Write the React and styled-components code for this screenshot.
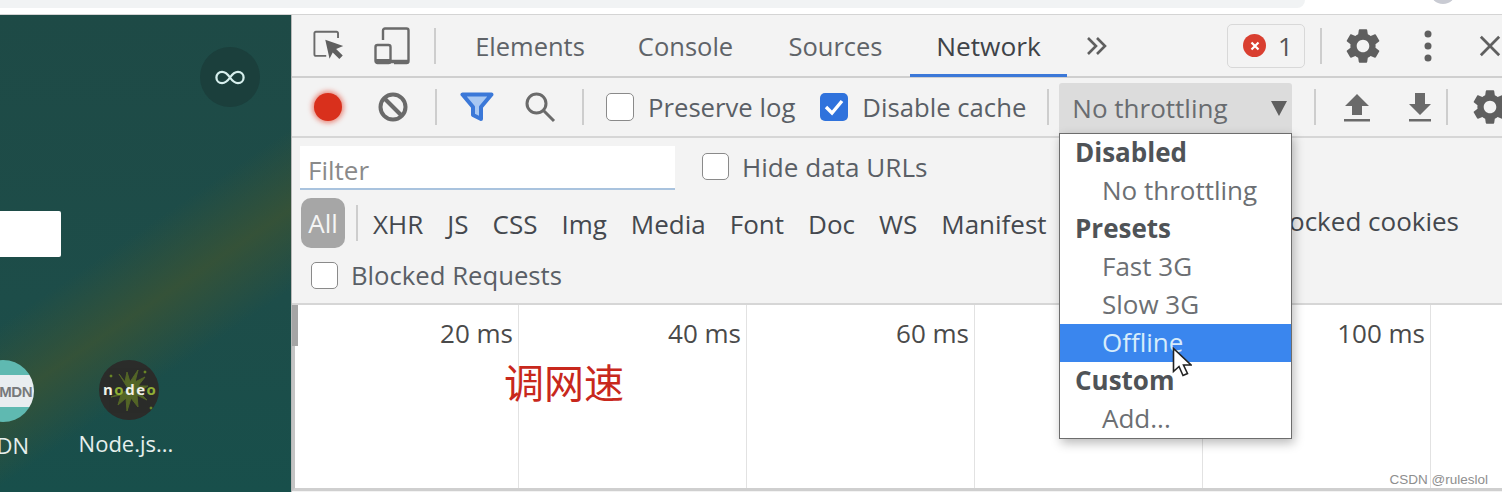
import React from "react"
import styled, { createGlobalStyle } from "styled-components"
import { MdSettings } from "react-icons/md"

const tabs = [
  { label: "Elements", width: 160 },
  { label: "Console", width: 151 },
  { label: "Sources", width: 149 },
  { label: "Network", width: 157, active: true },
]
const types = ["XHR", "JS", "CSS", "Img", "Media", "Font", "Doc", "WS", "Manifest", "Other"]
const marks = ["20 ms", "40 ms", "60 ms", "80 ms", "100 ms", ""]
const menu = [
  { label: "Disabled", title: true },
  { label: "No throttling" },
  { label: "Presets", title: true },
  { label: "Fast 3G" },
  { label: "Slow 3G" },
  { label: "Offline", active: true },
  { label: "Custom", title: true },
  { label: "Add..." },
]

const App = () => (
  <Page>
    <GlobalStyle />
    <TopBar>
      <AddressStrip />
      <Avatar />
    </TopBar>
    <Main>
      <Wallpaper>
        <InfinityButton>
          <svg width="30" height="15" viewBox="0 0 32 16" fill="none" stroke="#d6efed" strokeWidth="2.400">
            <path d="M16 8C13 3.500 10.500 2 7.500 2 4 2 1.500 4.500 1.500 8s2.500 6 6 6c3 0 5.500-1.500 8.500-6s5.500-6 8.500-6c3.500 0 6 2.500 6 6s-2.500 6-6 6c-3 0-5.500-1.500-8.500-6z" />
          </svg>
        </InfinityButton>
        <SearchStub />
        <Shortcuts>
          <Shortcut>
            <MdnLogo><span>MDN</span></MdnLogo>
            <ShortcutLabel>MDN</ShortcutLabel>
          </Shortcut>
          <Shortcut>
            <NodeLogo>
              <svg width="60" height="60" viewBox="0 0 60 60" fill="#6f8c26" stroke="#6f8c26" strokeWidth="1">
                <path d="M30 30L20 14l6 8 2-10 3 10 8-12-3 12 10-5-7 9 10 0-9 6 8 8-10-5 1 12-7-9-4 13-1-13-8 7 3-10-10 2z" opacity=".6" />
                <circle cx="52" cy="48" r="1" />
                <circle cx="12" cy="16" r="1" />
                <circle cx="46" cy="12" r="1" />
              </svg>
              <NodeWord>n<NodeDot>o</NodeDot>de<NodeDot>o</NodeDot></NodeWord>
            </NodeLogo>
            <ShortcutLabel $shift={6}>Node.js...</ShortcutLabel>
          </Shortcut>
        </Shortcuts>
      </Wallpaper>

      <Devtools>
        <TabBar>
          <IconSlot $w={62}>
            <svg width="34" height="33" viewBox="0 0 36 34" fill="none">
              <path d="M14 28H3a1.500 1.500 0 0 1-1.500-1.500V4A1.500 1.500 0 0 1 3 2.500h22A1.500 1.500 0 0 1 26.500 4v5" stroke="#6a6a6a" strokeWidth="2" />
              <path d="M13 11l19 6.500-7.500 3.200 7 7-3.600 3.600-7-7L17.500 31z" fill="#5f5f5f" />
            </svg>
          </IconSlot>
          <IconSlot $w={61}>
            <svg width="36" height="38" viewBox="0 0 36 38" fill="none" stroke="#6a6a6a" strokeWidth="2.400">
              <path d="M9 13V3.500A2 2 0 0 1 11 1.500h21.500a2 2 0 0 1 2 2V34a2 2 0 0 1-2 2H20" />
              <rect x="1.500" y="18" width="15" height="18" rx="2" />
              <path d="M1.500 34h15" strokeWidth="4" />
              <path d="M16 34.500h18" strokeWidth="3.500" />
            </svg>
          </IconSlot>
          <Divider $left={12} $right={14} />
          {tabs.map((tab) => (
            <Tab key={tab.label} $w={tab.width} $active={tab.active}>{tab.label}</Tab>
          ))}
          <IconSlot $w={60}>
            <svg width="22" height="20" viewBox="0 0 22 20" fill="none" stroke="#5f5f5f" strokeWidth="2.600">
              <path d="M2 2l8 8-8 8M11 2l8 8-8 8" />
            </svg>
          </IconSlot>
          <ErrorBadge>
            <ErrorDot>
              <svg width="10" height="10" viewBox="0 0 10 10" stroke="#fff" strokeWidth="2.200">
                <path d="M1.500 1.500l7 7M8.500 1.500l-7 7" />
              </svg>
            </ErrorDot>
            1
          </ErrorBadge>
          <Divider $left={15} $right={11} />
          <IconSlot $w={60}>
            <MdSettings size={42} color="#5f5f5f" />
          </IconSlot>
          <IconSlot $w={70}>
            <svg width="10" height="32" viewBox="0 0 10 32" fill="#5f5f5f">
              <circle cx="5" cy="4" r="3.500" />
              <circle cx="5" cy="16" r="3.500" />
              <circle cx="5" cy="28" r="3.500" />
            </svg>
          </IconSlot>
          <IconSlot $w={54}>
            <svg width="22" height="22" viewBox="0 0 24 24" stroke="#5f5f5f" strokeWidth="3">
              <path d="M2 2l20 20M22 2L2 22" />
            </svg>
          </IconSlot>
        </TabBar>

        <ActionBar>
          <IconSlot $w={64}><RecordDot /></IconSlot>
          <IconSlot $w={65}>
            <svg width="30" height="30" viewBox="0 0 30 30" fill="none" stroke="#6a6a6a" strokeWidth="4">
              <circle cx="15" cy="15" r="12.500" />
              <path d="M6 6l18 18" />
            </svg>
          </IconSlot>
          <Divider $left={10} $right={8} />
          <IconSlot $w={64}>
            <svg width="34" height="30" viewBox="0 0 34 30">
              <path d="M2.500 2.500h29L21 15v12l-8-4v-8z" fill="#a9c8f2" stroke="#3b78d8" strokeWidth="4" strokeLinejoin="round" />
            </svg>
          </IconSlot>
          <IconSlot $w={62}>
            <svg width="32" height="32" viewBox="0 0 32 32" fill="none" stroke="#6a6a6a" strokeWidth="3">
              <circle cx="12.500" cy="12.500" r="9.500" />
              <path d="M19.500 19.500L30 30" />
            </svg>
          </IconSlot>
          <Divider $left={11} $right={22} />
          <CheckField $gap={14}><Box $size={28} />Preserve log</CheckField>
          <CheckField $gap={14} $left={25}><Box $size={28} $checked><CheckMark /></Box>Disable cache</CheckField>
          <Divider $left={21} $right={10} />
          <ThrottleSelect>
            No throttling
            <Caret />
          </ThrottleSelect>
          <Divider $left={22} $right={9} />
          <IconSlot $w={64}>
            <svg width="26" height="30" viewBox="0 0 26 30" fill="#6a6a6a">
              <path d="M13 2l12 12h-7v9H8v-9H1zM0 27h26v2.500H0z" />
            </svg>
          </IconSlot>
          <IconSlot $w={62}>
            <svg width="22" height="30" viewBox="0 0 22 30" fill="#6a6a6a">
              <path d="M6 1h10v11h6L11 23 0 12h6zM0 27h22v2.500H0z" />
            </svg>
          </IconSlot>
          <Divider $left={-5} $right={21} />
          <IconSlot $w={42}>
            <MdSettings size={42} color="#5f5f5f" />
          </IconSlot>
        </ActionBar>

        <FilterPanel>
          <FilterRow>
            <FilterInput>Filter</FilterInput>
            <HideField $gap={13} $left={27}><Box $size={27} />Hide data URLs</HideField>
          </FilterRow>
          <TypeRow>
            <AllPill>All</AllPill>
            <Divider $left={11} $right={15} />
            {types.map((type) => (
              <TypeLabel key={type}>{type}</TypeLabel>
            ))}
            <CookieLabel>Has blocked cookies</CookieLabel>
          </TypeRow>
          <BlockedRow>
            <CheckField $gap={13}><Box $size={27} />Blocked Requests</CheckField>
          </BlockedRow>
        </FilterPanel>

        <Timeline>
          <ScrollThumb />
          {marks.map((mark, i) => (
            <Mark key={i} $w={i === 0 ? 224 : 228} $last={i === marks.length - 1}>{mark}</Mark>
          ))}
        </Timeline>

        <ThrottleMenu>
          {menu.map((item) => (
            <MenuRow key={item.label} $title={item.title} $active={item.active}>{item.label}</MenuRow>
          ))}
          <Pointer width="20" height="30" viewBox="0 0 20 30">
            <path d="M1.500 1.500v23l5.500-5 4 9 4.500-2-4-8.500h7.500z" fill="#fff" stroke="#222" strokeWidth="1.600" />
          </Pointer>
        </ThrottleMenu>

        <Caption>调网速</Caption>
        <Watermark>CSDN @ruleslol</Watermark>
      </Devtools>
    </Main>
  </Page>
)

export default App

const GlobalStyle = createGlobalStyle`
  html, body {
    margin: 0;
    padding: 0;
    background: #fff;
  }
`

const Page = styled.div`
  width: 1502px;
  height: 492px;
  overflow: hidden;
  display: flex;
  flex-direction: column;
  font-family: "Open Sans", "Noto Sans CJK SC", sans-serif;
  color: #5a5f66;
`

const TopBar = styled.div`
  height: 15px;
  flex: none;
  display: flex;
  overflow: hidden;
  background: #fff;
  border-bottom: 1px solid #d4d4d4;
  box-sizing: border-box;
`

const AddressStrip = styled.div`
  width: 1305px;
  height: 8px;
  background: #f1f3f4;
  border-bottom-right-radius: 8px;
`

const Avatar = styled.div`
  width: 26px;
  height: 26px;
  margin: -22px 0 0 125px;
  border-radius: 50%;
  background: #c9cbd3;
`

const Main = styled.div`
  flex: 1;
  min-height: 0;
  display: flex;
`

const Wallpaper = styled.div`
  width: 291px;
  flex: none;
  display: flex;
  flex-direction: column;
  overflow: hidden;
  box-sizing: border-box;
  padding-top: 32px;
  background:
    linear-gradient(146deg, transparent 46%, rgba(62, 84, 50, 0.72) 58%, transparent 70%),
    linear-gradient(#1e4a46, #1d4d49 60%, #184f4b);
`

const InfinityButton = styled.div`
  width: 60px;
  height: 60px;
  align-self: flex-end;
  margin-right: 31px;
  border-radius: 50%;
  background: #1b3f3c;
  display: flex;
  align-items: center;
  justify-content: center;
`

const SearchStub = styled.div`
  width: 61px;
  height: 46px;
  margin-top: 104px;
  background: #fff;
  border-radius: 0 2px 2px 0;
`

const Shortcuts = styled.div`
  display: flex;
  margin: 103px 0 0 -60px;
`

const Shortcut = styled.div`
  width: 126px;
  display: flex;
  flex-direction: column;
  align-items: center;
`

const MdnLogo = styled.div`
  width: 62px;
  height: 62px;
  box-sizing: border-box;
  padding-right: 2px;
  border-radius: 50%;
  background: linear-gradient(#5fb9b1 24%, #e9edf0 24%, #e9edf0 76%, #5fb9b1 76%);
  display: flex;
  align-items: center;
  justify-content: flex-end;
  font: 700 15px "Liberation Sans", sans-serif;
  letter-spacing: -0.5px;
  color: #77797c;
`

const NodeLogo = styled.div`
  width: 60px;
  height: 60px;
  position: relative;
  border-radius: 50%;
  overflow: hidden;
  background: #2b2c2a;
`

const NodeWord = styled.span`
  position: absolute;
  left: 4px;
  top: 19px;
  font: 700 15px "Open Sans", sans-serif;
  letter-spacing: 1.500px;
  color: #f1f1e8;
`

const NodeDot = styled.span`
  color: #8fae35;
`

const ShortcutLabel = styled.div`
  margin: 7px ${(props) => props.$shift || 0}px 0 0;
  font-size: 22px;
  line-height: 32px;
  color: #e6efed;
  white-space: nowrap;
`

const Devtools = styled.div`
  flex: 1;
  min-width: 0;
  position: relative;
  display: flex;
  flex-direction: column;
  background: #f3f3f3;
  border-left: 1px solid #b9b9b9;
  font-size: 26px;
`

const TabBar = styled.div`
  height: 63px;
  flex: none;
  box-sizing: border-box;
  display: flex;
  align-items: center;
  padding-left: 7px;
  border-bottom: 2px solid #cfcfcf;
`

const IconSlot = styled.div`
  width: ${(props) => props.$w}px;
  flex: none;
  display: flex;
  align-items: center;
  justify-content: center;
`

const Divider = styled.div`
  width: 2px;
  height: 36px;
  flex: none;
  margin: 0 ${(props) => props.$right}px 0 ${(props) => props.$left}px;
  background: #cdcdcd;
`

const Tab = styled.div`
  width: ${(props) => props.$w}px;
  height: 100%;
  flex: none;
  box-sizing: border-box;
  display: flex;
  align-items: center;
  justify-content: center;
  padding-top: 3px;
  font-size: ${(props) => (props.$active ? "26.300px" : "25.500px")};
  border-bottom: 3px solid ${(props) => (props.$active ? "#3b78d8" : "transparent")};
  margin-bottom: ${(props) => (props.$active ? "-1px" : "0")};
  color: ${(props) => (props.$active ? "#3f4348" : "#5f6368")};
`

const ErrorBadge = styled.div`
  width: 78px;
  height: 44px;
  flex: none;
  box-sizing: border-box;
  margin-left: 100px;
  display: flex;
  align-items: center;
  gap: 12px;
  padding-left: 15px;
  border: 1px solid #d8d8d8;
  border-radius: 5px;
  color: #555;
`

const ErrorDot = styled.div`
  width: 23px;
  height: 23px;
  border-radius: 50%;
  background: #d93f30;
  display: flex;
  align-items: center;
  justify-content: center;
`

const ActionBar = styled.div`
  height: 60px;
  flex: none;
  box-sizing: border-box;
  display: flex;
  align-items: center;
  padding-left: 4px;
  border-bottom: 2px solid #d6d6d6;
`

const RecordDot = styled.div`
  width: 28px;
  height: 28px;
  border-radius: 50%;
  background: #d9301c;
  box-shadow: 0 0 5px 2px rgba(226, 70, 50, 0.6);
`

const CheckField = styled.label`
  display: flex;
  align-items: center;
  gap: ${(props) => props.$gap}px;
  margin-left: ${(props) => props.$left || 0}px;
  font-size: 25.700px;
  white-space: nowrap;
`

const HideField = styled(CheckField)`
  margin-bottom: 3px;
  font-size: 26.100px;
`

const Box = styled.span`
  width: ${(props) => props.$size}px;
  height: ${(props) => props.$size}px;
  flex: none;
  box-sizing: border-box;
  display: flex;
  align-items: center;
  justify-content: center;
  border-radius: 5px;
  border: ${(props) => (props.$checked ? "none" : "1.500px solid #8a8a8a")};
  background: ${(props) => (props.$checked ? "#2f72dc" : "#fff")};
`

const CheckMark = () => (
  <svg width="20" height="18" viewBox="0 0 20 18" fill="none" stroke="#fff" strokeWidth="3.400">
    <path d="M2 9l6 6L18 3" />
  </svg>
)

const ThrottleSelect = styled.div`
  width: 233px;
  height: 54px;
  flex: none;
  align-self: flex-end;
  box-sizing: border-box;
  display: flex;
  align-items: center;
  justify-content: space-between;
  padding: 0 5px 4px 13px;
  margin-bottom: -1px;
  background: #dcdcdc;
  border-radius: 3px 3px 0 0;
  color: #696c70;
`

const Caret = styled.span`
  width: 0;
  height: 0;
  border-left: 8px solid transparent;
  border-right: 8px solid transparent;
  border-top: 15px solid #5f5f5f;
`

const FilterPanel = styled.div`
  height: 167px;
  flex: none;
  box-sizing: border-box;
  display: flex;
  flex-direction: column;
  padding: 8px 0 0 8px;
  border-bottom: 2px solid #d6d6d6;
`

const FilterRow = styled.div`
  height: 44px;
  display: flex;
  align-items: center;
`

const FilterInput = styled.div`
  width: 375px;
  height: 44px;
  box-sizing: border-box;
  padding: 4px 0 0 8px;
  line-height: 40px;
  background: #fff;
  border-bottom: 2px solid #a9c3de;
  color: #8a8a8a;
`

const TypeRow = styled.div`
  height: 50px;
  margin-top: 8px;
  display: flex;
  align-items: center;
  white-space: nowrap;
  padding: 0 0 0 1px;
`

const AllPill = styled.div`
  width: 44px;
  height: 50px;
  flex: none;
  display: flex;
  align-items: center;
  justify-content: center;
  border-radius: 10px;
  background: #a6a6a6;
  color: #f5f5f5;
`

const TypeLabel = styled.span`
  margin: 2px 24px 0 0;
  color: #44484e;
`

const CookieLabel = styled.span`
  position: absolute;
  right: 43px;
  top: 188px;
  color: #44484e;
`

const BlockedRow = styled.div`
  margin: 10px 0 0 11px;
  color: #5a5f66;
`

const Timeline = styled.div`
  flex: 1;
  min-height: 0;
  position: relative;
  display: flex;
  background: #fff;
  border-left: 3px solid #c4c4c4;
  border-bottom: 3px solid #cfcfcf;
  margin-bottom: 1px;
`

const ScrollThumb = styled.div`
  position: absolute;
  left: -3px;
  top: 0;
  width: 6px;
  height: 41px;
  background: #a5a5a5;
`

const Mark = styled.div`
  width: ${(props) => props.$w}px;
  flex: none;
  box-sizing: border-box;
  padding: 11px 5px 0 0;
  text-align: right;
  line-height: 34px;
  color: #4a4a4a;
  border-right: ${(props) => (props.$last ? "none" : "1px solid #e2e2e2")};
`

const ThrottleMenu = styled.div`
  position: absolute;
  left: 767px;
  top: 118px;
  width: 233px;
  height: 306px;
  box-sizing: border-box;
  background: #fff;
  border: 1px solid #6d6d6d;
  box-shadow: 2px 4px 10px rgba(0, 0, 0, 0.28);
`

const MenuRow = styled.div`
  height: 38px;
  line-height: 37px;
  box-sizing: border-box;
  padding-left: ${(props) => (props.$title ? 15 : 42)}px;
  font-weight: ${(props) => (props.$title ? 700 : 400)};
  color: ${(props) => (props.$active ? "#d7ecfb" : props.$title ? "#4f5357" : "#6c6f73")};
  background: ${(props) => (props.$active ? "#3a86ee" : "transparent")};
`

const Pointer = styled.svg`
  position: absolute;
  left: 112px;
  top: 213px;
`

const Caption = styled.div`
  position: absolute;
  left: 212px;
  top: 340px;
  font-size: 40px;
  line-height: 56px;
  color: #c8281c;
`

const Watermark = styled.div`
  position: absolute;
  right: 14px;
  bottom: 5px;
  font: 13.500px "Liberation Sans", sans-serif;
  color: #8e8e8e;
`
